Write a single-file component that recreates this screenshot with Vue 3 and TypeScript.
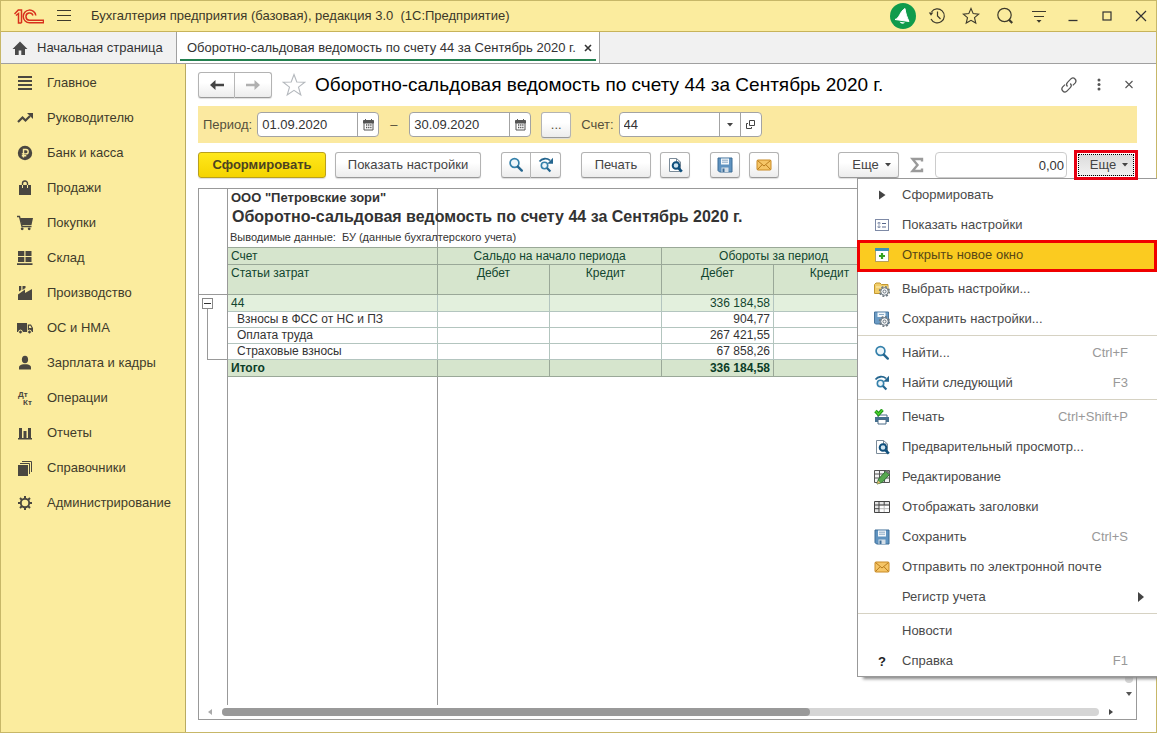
<script setup lang="ts">
import { ref } from 'vue'

interface NavItem { icon: string; label: string }
interface MenuItem { icon?: string; label: string; keys?: string; active?: boolean; sub?: boolean }
interface ReportRow { name: string; turnover: string; kind: 'group' | 'leaf' | 'total' }

const magnifier =
  '<circle cx="6.5" cy="6" r="4.4" fill="#eef6fa" stroke="#3581ab" stroke-width="1.7"/><path d="M9.8 9.6l4 4" stroke="#25668f" stroke-width="2.4" stroke-linecap="round"/>'
const nextFind =
  '<path d="M1.5 4.500C4 1 9 1 12 3.400" fill="none" stroke="#25668f" stroke-width="1.8"/><path d="M15 .8v6H9.200z" fill="#25668f"/><circle cx="6.500" cy="8.500" r="3.200" fill="#eef6fa" stroke="#3581ab" stroke-width="1.6"/><path d="M9 11l3.400 3.500" stroke="#25668f" stroke-width="2.2"/>'
const floppy =
  '<path d="M1 1h14v14H2.5L1 13.5z" fill="#5f93c0" stroke="#3d6c96"/><path d="M4 1.5h8v6H4z" fill="#f4f8fb"/><path d="M5 3.2h6M5 5.2h6" stroke="#89a9c4"/><path d="M4.5 10.5h7V15h-7z" fill="#d5dfe8"/><path d="M5.5 11.5h2V15h-2z" fill="#3d6c96"/>'
const envelope =
  '<rect x="1" y="3" width="14" height="10" rx="1" fill="#f5c566" stroke="#c98a25"/><path d="M1.5 3.5L8 9l6.5-5.5M1.5 12.5L6 7.800M14.5 12.5L10 7.800" fill="none" stroke="#b87b1c"/>'
const gear =
  '<circle cx="10.5" cy="10.5" r="4.800" fill="none" stroke="#6c7780" stroke-width="1.600" stroke-dasharray="2 1.770"/><circle cx="10.5" cy="10.5" r="3.800" fill="#f2f4f6" stroke="#6c7780"/><circle cx="10.5" cy="10.5" r="1.5" fill="#fff" stroke="#6c7780"/>'

const icons: Record<string, string> = {
  list: '<path d="M1 2h14M1 6h14M1 10h14M1 14h14" stroke="#4a4740" stroke-width="2"/>',
  trend: '<path d="M1 12l4.5-4.5 3 3L13 6" fill="none" stroke="#4a4740" stroke-width="2.2"/><path d="M10 3h6v6z" fill="#4a4740"/>',
  ruble: '<circle cx="8" cy="8" r="7.2" fill="#4a4740"/><path d="M6.5 12.5V4.5H9a2.2 2.2 0 0 1 0 4.4H4.8M4.8 10.8h4.5" fill="none" stroke="#fbec9e" stroke-width="1.4"/>',
  bag: '<path d="M2 5h12v10H2z" fill="#4a4740"/><path d="M5.5 7.5V3.5a2.5 2.5 0 0 1 5 0v4" fill="none" stroke="#4a4740" stroke-width="1.4"/><path d="M5.5 5v3M10.5 5v3" stroke="#fbec9e"/>',
  cart: '<path d="M3 3h13l-1.5 7H5z" fill="#4a4740"/><path d="M0 1.5h2.5l2.5 10h9.5" fill="none" stroke="#4a4740" stroke-width="1.3"/><circle cx="5.2" cy="13.8" r="1.4" fill="#4a4740"/><circle cx="12.2" cy="13.8" r="1.4" fill="#4a4740"/>',
  stock: '<path d="M1 1h6.3v5H1zM8.5 1h6v5h-6zM1 7h6.3v5H1zM8.5 7h6v5h-6zM0 13.2h15.5V15H0z" fill="#4a4740"/>',
  factory: '<path d="M1 15V9.5l7-5v3.5L15 4v11zM2 1h2.3v4L2 6.5zM5.5 1h3v2l-3 2z" fill="#4a4740"/>',
  truck: '<path d="M0 3h10v9H0zM10.8 4.5H14L16 8v4h-5.2z" fill="#4a4740"/><path d="M12 5.8h1.5L14.6 8H12z" fill="#fbec9e"/><circle cx="3.5" cy="12" r="1.9" fill="#4a4740" stroke="#fbec9e"/><circle cx="12.5" cy="12" r="1.9" fill="#4a4740" stroke="#fbec9e"/>',
  person: '<ellipse cx="8" cy="4.5" rx="3.1" ry="3.8" fill="#4a4740"/><path d="M2 14.5v-2.3Q2 10 6 9.2h4q4 .8 4 3v2.3z" fill="#4a4740"/>',
  dtkt: '<text x="1" y="7" font-family="Liberation Sans, sans-serif" font-weight="bold" font-size="8" fill="#4a4740">Дт</text><text x="6" y="15" font-family="Liberation Sans, sans-serif" font-weight="bold" font-size="8" fill="#4a4740">Кт</text>',
  chart: '<path d="M2 3h3v10H2zM6.5 6h3v7h-3zM11 3h3v10h-3zM1 13h14v1.5H1z" fill="#4a4740"/>',
  books: '<path d="M1 5h10v11H1z" fill="#4a4740"/><path d="M3 3.5h9.5V14M5 1.5h9.5V12" fill="none" stroke="#4a4740"/>',
  cog: '<circle cx="8" cy="8" r="4.2" fill="none" stroke="#4a4740" stroke-width="1.9"/><path d="M8 1v3M8 12v3M1 8h3M12 8h3M3 3l2.2 2.2M10.8 10.8L13 13M13 3l-2.2 2.2M5.2 10.8L3 13" stroke="#4a4740" stroke-width="2"/>',
  home: '<path d="M8 1.5L.5 9H3v6h3.7v-4.5h2.6V15H13V9h2.5z" fill="#4a4a4a"/>',
  play: '<path d="M5 3.500L11.500 8 5 12.500z" fill="#444"/>',
  settings: '<rect x="1.5" y="2.5" width="13" height="11" fill="#fff" stroke="#7e8aa6"/><path d="M4 5.5h2v1.5H4zM4 9h2v1.5H4z" fill="none" stroke="#7e8aa6" stroke-width=".8"/><path d="M8 6.5h4M8 10h4" stroke="#59688c"/>',
  window: '<rect x="1.5" y="1.5" width="13" height="13" fill="#fff" stroke="#b7a05c"/><path d="M1 1h14v3H1z" fill="#3e8fb4"/><path d="M8 6v6M5 9h6" stroke="#35a320" stroke-width="2.2"/>',
  folder: '<path d="M.5 12.5V3.5L2 2h4l1.5 1.5H14v9z" fill="#f1cd68" stroke="#c39830"/><path d="M2 6h12" stroke="#fff0b8"/>' + gear,
  saveset: '<path d="M.5 1h14v12H1.5L.5 12z" fill="#6b9bc4" stroke="#47749d"/><path d="M3.5 1.5h8V6h-8z" fill="#f4f8fb"/><path d="M5 3.5h5" stroke="#89a9c4"/>' + gear,
  find: magnifier,
  next: nextFind,
  print: '<path d="M4 6h9v3H4z" fill="#fff" stroke="#4a6b86"/><path d="M1 8h14v5H1z" fill="#45708f"/><path d="M4 10.5h8V15H4z" fill="#fff" stroke="#4a6b86"/><path d="M1.5 2l3 3.2L8.5.8" fill="none" stroke="#168b16" stroke-width="3.4"/><path d="M1.5 2l3 3.2L8.5.8" fill="none" stroke="#4cd02c" stroke-width="1.6"/>',
  preview: '<path d="M2.5 1.5h7l4 3.5v9.5h-11z" fill="#fff" stroke="#7b8b99"/><path d="M9.5 1.5v3.5h4" fill="none" stroke="#7b8b99"/><circle cx="9" cy="8.5" r="3.3" fill="#cfe4f0" stroke="#0f4f7c" stroke-width="2"/><path d="M11.4 11l3.4 3.6" stroke="#0f4f7c" stroke-width="2.6"/>',
  edit: '<path d="M.5 1.5h15v12H.5zM.5 5h15M.5 9h15M5.5 1.5v12M10.5 1.5v12" fill="#f3f3f3" stroke="#555"/><path d="M3 15l1.500-5 7-7.500 4 3-7.500 8z" fill="#57a84f" stroke="#2e6f34"/><path d="M3 15l1-3.500 2.500 2.500z" fill="#e8b878"/><path d="M11.500 2.500l1.500-1.500 3 2.500-1 1.800z" fill="#777"/>',
  table: '<path d="M.5 2.5h15v11H.5z" fill="#fff"/><path d="M.5 2.5h15v3.5H.5zM.5 6h4.5v7.5H.5z" fill="#e4e4e4"/><path d="M5 6h10.5M5 9.7h10.5M10.2 6v7.5" stroke="#bbb"/><path d="M.5 2.5h15v11H.5zM.5 6h15M5 2.5v11M.5 9.7H5M10.2 2.5V6" fill="none" stroke="#444"/>',
  save: floppy,
  mail: envelope,
  help: '<text x="8" y="13" text-anchor="middle" font-family="Liberation Sans, sans-serif" font-weight="bold" font-size="13" fill="#222">?</text>',
}

const nav: NavItem[] = [
  { icon: 'list', label: 'Главное' },
  { icon: 'trend', label: 'Руководителю' },
  { icon: 'ruble', label: 'Банк и касса' },
  { icon: 'bag', label: 'Продажи' },
  { icon: 'cart', label: 'Покупки' },
  { icon: 'stock', label: 'Склад' },
  { icon: 'factory', label: 'Производство' },
  { icon: 'truck', label: 'ОС и НМА' },
  { icon: 'person', label: 'Зарплата и кадры' },
  { icon: 'dtkt', label: 'Операции' },
  { icon: 'chart', label: 'Отчеты' },
  { icon: 'books', label: 'Справочники' },
  { icon: 'cog', label: 'Администрирование' },
]

const menu: MenuItem[][] = [
  [
    { icon: 'play', label: 'Сформировать' },
    { icon: 'settings', label: 'Показать настройки' },
    { icon: 'window', label: 'Открыть новое окно', active: true },
  ],
  [
    { icon: 'folder', label: 'Выбрать настройки...' },
    { icon: 'saveset', label: 'Сохранить настройки...' },
  ],
  [
    { icon: 'find', label: 'Найти...', keys: 'Ctrl+F' },
    { icon: 'next', label: 'Найти следующий', keys: 'F3' },
  ],
  [
    { icon: 'print', label: 'Печать', keys: 'Ctrl+Shift+P' },
    { icon: 'preview', label: 'Предварительный просмотр...' },
    { icon: 'edit', label: 'Редактирование' },
    { icon: 'table', label: 'Отображать заголовки' },
    { icon: 'save', label: 'Сохранить', keys: 'Ctrl+S' },
    { icon: 'mail', label: 'Отправить по электронной почте' },
    { label: 'Регистр учета', sub: true },
  ],
  [
    { label: 'Новости' },
    { icon: 'help', label: 'Справка', keys: 'F1' },
  ],
]

const rows: ReportRow[] = [
  { name: '44', turnover: '336 184,58', kind: 'group' },
  { name: 'Взносы в ФСС от НС и ПЗ', turnover: '904,77', kind: 'leaf' },
  { name: 'Оплата труда', turnover: '267 421,55', kind: 'leaf' },
  { name: 'Страховые взносы', turnover: '67 858,26', kind: 'leaf' },
  { name: 'Итого', turnover: '336 184,58', kind: 'total' },
]

const dateFrom = ref('01.09.2020')
const dateTo = ref('30.09.2020')
const account = ref('44')
const sum = ref('0,00')
const menuOpen = ref(true)
</script>

<template>
  <div class="app">
    <header class="titlebar">
      <svg class="logo" viewBox="0 0 30 15" fill="none" stroke="#d8301c" stroke-width="1.5">
        <path d="M.5 5L4.3 1H7.500V14M2 6.500L4.500 4.500V14H7.500" />
        <path d="M21.800 6.500A6.300 6.300 0 1 0 15.500 13.700H29.500V11.200H15.500A3.600 3.600 0 1 1 19 6.500" />
      </svg>
      <button class="plain burger" aria-label="Меню">
        <svg width="16" height="14" viewBox="0 0 16 14" stroke="#3d3a2c" stroke-width="1.2"><path d="M1 1.500h14M1 6.500h14M1 11.500h14" /></svg>
      </button>
      <span class="app-title">Бухгалтерия предприятия (базовая), редакция 3.0&nbsp; (1С:Предприятие)</span>
      <div class="title-tools">
        <button class="plain bell" aria-label="Уведомления">
          <svg width="26" height="26" viewBox="0 0 26 26">
            <circle cx="13" cy="13" r="13" fill="#109b4c" />
            <path d="M15 5.500c.6 5 2 8.500 4 13L5 16.500c5-1.500 4.500-8 10-11z" fill="#fff" stroke="#fff" stroke-linejoin="round" />
            <path d="M9.500 18.700l5.500.8q-3 3-5.500-.8z" fill="#fff" />
          </svg>
        </button>
        <button class="plain" aria-label="История">
          <svg width="18" height="18" viewBox="0 0 18 18" fill="none" stroke="#3d3a2c" stroke-width="1.2"><path d="M3.500 5A7 7 0 1 1 3 12M9.500 4.500V9l3 3" /><path d="M.8 5.500h4.500L3 8.800z" fill="#3d3a2c" stroke="none" /></svg>
        </button>
        <button class="plain" aria-label="Избранное">
          <svg width="18" height="18" viewBox="0 0 18 18" fill="none" stroke="#3d3a2c" stroke-width="1.1"><path d="M9 1.500l2.200 5.100 5.500.5-4.200 3.600 1.300 5.400L9 13.300l-4.800 2.800 1.300-5.400L1.300 7.100l5.500-.5z" /></svg>
        </button>
        <button class="plain" aria-label="Поиск">
          <svg width="18" height="18" viewBox="0 0 18 18" fill="none" stroke="#3d3a2c" stroke-width="1.2"><circle cx="8.500" cy="8" r="6.700" /><path d="M12.800 12.500l3.400 3.500" stroke-width="2.200" /></svg>
        </button>
        <button class="plain" aria-label="Настройка">
          <svg width="18" height="18" viewBox="0 0 18 18" stroke="#3d3a2c" stroke-width="1.2"><path d="M2 4.500h14M4 9.500h10" /><path d="M6.500 13h5L9 15.800z" fill="#3d3a2c" stroke="none" /></svg>
        </button>
        <button class="plain" aria-label="Свернуть">
          <svg width="18" height="18" viewBox="0 0 18 18"><path d="M4.500 13.500h9" stroke="#333" stroke-width="1.3" /></svg>
        </button>
        <button class="plain" aria-label="Развернуть">
          <svg width="18" height="18" viewBox="0 0 18 18"><rect x="5" y="5" width="8" height="8" fill="none" stroke="#333" stroke-width="1.2" /></svg>
        </button>
        <button class="plain" aria-label="Закрыть">
          <svg width="18" height="18" viewBox="0 0 18 18"><path d="M4 4l10 10M14 4L4 14" stroke="#333" stroke-width="1.2" /></svg>
        </button>
      </div>
    </header>

    <div class="tabs">
      <button class="tab home"><svg class="ico" viewBox="0 0 16 16" v-html="icons.home" />Начальная страница</button>
      <button class="tab current">
        <span>Оборотно-сальдовая ведомость по счету 44 за Сентябрь 2020 г.</span>
        <svg width="8" height="8" viewBox="0 0 8 8"><path d="M1 1l6 6M7 1L1 7" stroke="#333" stroke-width="1.6" /></svg>
      </button>
    </div>

    <div class="body">
      <nav class="sidebar">
        <a v-for="n in nav" :key="n.label" href="#" class="nav-item">
          <svg class="ico" viewBox="0 0 16 16" v-html="icons[n.icon]" />{{ n.label }}
        </a>
      </nav>

      <main class="main">
        <div class="heading">
          <div class="group">
            <button class="btn arrow" aria-label="Назад"><svg width="16" height="12" viewBox="0 0 16 12"><path d="M6.500 1v3.800H15v2.400H6.500V11L1 6z" fill="#444" /></svg></button>
            <button class="btn arrow" aria-label="Вперед"><svg width="16" height="12" viewBox="0 0 16 12"><path d="M9.500 1v3.800H1v2.400h8.500V11L15 6z" fill="#b0b0b0" /></svg></button>
          </div>
          <button class="plain star" aria-label="В избранное">
            <svg width="24" height="24" viewBox="0 0 24 24" fill="none" stroke="#b4b8bd" stroke-width="1.1"><path d="M12 1.500l2.800 7.500 8 .2-6.300 4.900 2.300 7.900L12 17.300 5.200 22l2.300-7.900L1.200 9.200l8-.2z" /></svg>
          </button>
          <h1>Оборотно-сальдовая ведомость по счету 44 за Сентябрь 2020 г.</h1>
          <div class="head-tools">
            <button class="plain" aria-label="Ссылка">
              <svg width="18" height="18" viewBox="0 0 18 18" fill="none" stroke="#555" stroke-width="1.2"><path d="M7.500 10.500a3 3 0 0 1 0-4.200l3.600-3.600a3 3 0 0 1 4.200 4.200l-2.500 2.500M10.300 7.500a3 3 0 0 1 0 4.200l-3.600 3.600a3 3 0 0 1-4.200-4.200L5 8.600" /></svg>
            </button>
            <button class="plain" aria-label="Действия">
              <svg width="18" height="18" viewBox="0 0 18 18" fill="#555"><circle cx="9" cy="4" r="1.500" /><circle cx="9" cy="8.500" r="1.500" /><circle cx="9" cy="13" r="1.500" /></svg>
            </button>
            <button class="plain" aria-label="Закрыть вкладку">
              <svg width="18" height="18" viewBox="0 0 18 18"><path d="M5.500 5l7 7M12.500 5l-7 7" stroke="#555" stroke-width="1.1" /></svg>
            </button>
          </div>
        </div>

        <div class="filters">
          <label for="from">Период:</label>
          <div class="field">
            <input id="from" v-model="dateFrom">
            <button aria-label="Календарь"><svg width="11" height="12" viewBox="0 0 11 12"><path d="M1 2h9v9H1z" fill="#fff" stroke="#555" /><path d="M.5 1.500h10V4H.5zM2.500 0v2M8.500 0v2" fill="#555" stroke="#555" /><path d="M3 6h5.500M3 8.500h5.500" stroke="#555" stroke-width="1.4" stroke-dasharray="1.300 .8" /></svg></button>
          </div>
          <label class="dash" for="to">–</label>
          <div class="field">
            <input id="to" v-model="dateTo">
            <button aria-label="Календарь"><svg width="11" height="12" viewBox="0 0 11 12"><path d="M1 2h9v9H1z" fill="#fff" stroke="#555" /><path d="M.5 1.500h10V4H.5zM2.500 0v2M8.500 0v2" fill="#555" stroke="#555" /><path d="M3 6h5.500M3 8.500h5.500" stroke="#555" stroke-width="1.4" stroke-dasharray="1.300 .8" /></svg></button>
          </div>
          <button class="btn dots">...</button>
          <label for="acc">Счет:</label>
          <div class="field">
            <input id="acc" v-model="account">
            <button aria-label="Выбрать"><svg width="6" height="4" viewBox="0 0 6 4"><path d="M0 0h6L3 3.500z" fill="#444" /></svg></button>
            <button aria-label="Открыть"><svg width="11" height="11" viewBox="0 0 11 11" fill="none" stroke="#444"><path d="M4.500 1.500h5v5h-5zM3 4.500H1.500v5h5V8" /></svg></button>
          </div>
        </div>

        <div class="toolbar">
          <button class="btn primary">Сформировать</button>
          <button class="btn wide">Показать настройки</button>
          <div class="group find">
            <button class="btn icon" aria-label="Найти"><svg class="ico" viewBox="0 0 16 16" v-html="icons.find" /></button>
            <button class="btn icon" aria-label="Найти следующий"><svg class="ico" viewBox="0 0 16 16" v-html="icons.next" /></button>
          </div>
          <button class="btn print">Печать</button>
          <button class="btn icon" aria-label="Предварительный просмотр"><svg class="ico" viewBox="0 0 16 16" v-html="icons.preview" /></button>
          <button class="btn icon save" aria-label="Сохранить"><svg class="ico" viewBox="0 0 16 16" v-html="icons.save" /></button>
          <button class="btn icon" aria-label="Отправить по почте"><svg class="ico" viewBox="0 0 16 16" v-html="icons.mail" /></button>
          <div class="right-tools">
            <button class="btn more">Еще<svg width="6" height="4" viewBox="0 0 6 4"><path d="M0 0h6L3 3.500z" fill="#444" /></svg></button>
            <label class="sigma" for="sum" aria-label="Сумма">
              <svg width="14" height="16" viewBox="0 0 14 16"><path d="M12 4.500V2H2.500l5 6-5 6H12v-2.500" fill="none" stroke="#9a9a9a" stroke-width="2.400" /></svg>
            </label>
            <input id="sum" v-model="sum" class="sum">
            <div class="anchor">
              <div class="frame">
                <button class="more focus" @click="menuOpen = !menuOpen">Еще<svg width="6" height="4" viewBox="0 0 6 4"><path d="M0 0h6L3 3.500z" fill="#444" /></svg></button>
              </div>
              <div v-if="menuOpen" class="menu" role="menu">
                <div v-for="(section, i) in menu" :key="i" class="section">
                  <button v-for="m in section" :key="m.label" role="menuitem" class="item" :class="{ active: m.active }">
                    <svg class="ico" viewBox="0 0 16 16" v-html="m.icon ? icons[m.icon] : ''" />
                    <span>{{ m.label }}</span>
                    <kbd v-if="m.keys">{{ m.keys }}</kbd>
                    <svg v-if="m.sub" class="sub" width="6" height="10" viewBox="0 0 6 10"><path d="M0 0l6 5-6 5z" fill="#444" /></svg>
                  </button>
                </div>
              </div>
            </div>
          </div>
        </div>

        <section class="report">
          <div class="sheet">
            <div class="gutter">
              <div class="gutter-head"></div>
              <div class="tree"><button aria-label="Свернуть группу"></button><i></i></div>
            </div>
            <div class="page">
              <p class="org">ООО "Петровские зори"</p>
              <h2>Оборотно-сальдовая ведомость по счету 44 за Сентябрь 2020 г.</h2>
              <p class="note">Выводимые данные:&nbsp; БУ (данные бухгалтерского учета)</p>
              <table>
                <colgroup><col class="c-name"><col v-for="c in 6" :key="c" class="c-num"></colgroup>
                <thead>
                  <tr class="h1">
                    <th class="l">Счет</th>
                    <th colspan="2">Сальдо на начало периода</th>
                    <th colspan="2">Обороты за период</th>
                    <th colspan="2"></th>
                  </tr>
                  <tr class="h2">
                    <th class="l">Статьи затрат</th>
                    <th>Дебет</th><th>Кредит</th><th>Дебет</th><th>Кредит</th><th></th><th></th>
                  </tr>
                </thead>
                <tbody>
                  <tr v-for="r in rows" :key="r.name" :class="r.kind">
                    <td class="l">{{ r.name }}</td><td></td><td></td><td>{{ r.turnover }}</td><td></td><td></td><td></td>
                  </tr>
                </tbody>
              </table>
            </div>
            <div class="vscroll"><i></i><svg width="6" height="4" viewBox="0 0 6 4"><path d="M0 0h6L3 4z" fill="#555" /></svg></div>
          </div>
          <div class="hscroll">
            <svg width="4" height="6" viewBox="0 0 4 6"><path d="M4 0v6L0 3z" fill="#aaa" /></svg>
            <div class="track"><i></i></div>
            <svg width="4" height="6" viewBox="0 0 4 6"><path d="M0 0v6l4-3z" fill="#444" /></svg>
          </div>
        </section>
      </main>
    </div>
  </div>
</template>

<style>
body { margin: 0; }
</style>

<style scoped>
* { box-sizing: border-box; }
.app {
  min-height: 100vh;
  display: flex;
  flex-direction: column;
  border: 1px solid #c7b768;
  background: #fff;
  color: #444;
  font: 13px/16px "Liberation Sans", Arial, sans-serif;
}
button, input { font: inherit; color: inherit; }
button { cursor: pointer; }
.plain { border: 0; background: none; padding: 0; display: flex; align-items: center; justify-content: center; }
.ico { width: 16px; height: 16px; flex: none; }

.titlebar { height: 31px; display: flex; align-items: center; background: #fbec9e; border-bottom: 1px solid #c7b35a; padding: 0 6px 0 13px; color: #3b3829; }
.logo { width: 30px; height: 15px; }
.burger { margin-left: 12px; }
.app-title { margin-left: 19px; }
.title-tools { margin-left: auto; display: flex; align-items: center; gap: 16px; }
.bell { margin-right: -4px; }

.tabs { height: 32px; display: flex; background: #f1f1f1; border-bottom: 1px solid #a0a0a0; }
.tab { border: 0; background: none; border-right: 1px solid #a0a0a0; display: flex; align-items: center; color: #333; }
.home { width: 176px; padding: 0 0 0 11px; gap: 9px; }
.current { background: linear-gradient(#23804f, #23804f) 3px 27px / calc(100% - 6px) 2px no-repeat #fff; padding: 0 7px 0 10px; gap: 8px; }

.body { flex: 1; display: flex; }
.sidebar { width: 185px; flex: none; background: #fbec9e; border-right: 1px solid #b9ab62; padding-top: 1px; }
.nav-item { height: 35px; display: flex; align-items: center; gap: 14px; padding-left: 16px; color: #3f3b2b; text-decoration: none; white-space: nowrap; }

.main { flex: 1; min-width: 0; display: flex; flex-direction: column; padding: 8px 19px 12px 12px; }
.heading { height: 26px; display: flex; align-items: center; }
.btn {
  height: 26px; padding: 0 12px; display: flex; align-items: center; justify-content: center;
  border: 1px solid #b3b3b3; border-bottom-color: #999; border-radius: 3px;
  background: linear-gradient(#fff 40%, #ececec); box-shadow: 0 1px 1px #ddd; white-space: nowrap;
}
.group { display: flex; }
.group .btn:first-child { border-radius: 3px 0 0 3px; }
.group .btn:last-child { border-radius: 0 3px 3px 0; border-left: 0; }
.arrow { width: 37px; padding: 0; }
.star { margin-left: 10px; }
h1 { margin: 0 0 0 9px; font-size: 19px; line-height: 22px; font-weight: 400; color: #000; white-space: nowrap; }
.head-tools { margin: 0 -1px 0 auto; display: flex; gap: 12px; }

.filters { margin-top: 8px; height: 37px; display: flex; align-items: center; background: #fbe9a0; padding-left: 5px; color: #55503c; }
.field { display: flex; height: 25px; border: 1px solid #a3a3a3; border-radius: 4px; background: #fff; overflow: hidden; margin-left: 5px; }
.field input { width: 99px; border: 0; padding: 0 0 0 4px; outline: 0; color: #333; background: none; }
.field button { width: 21px; padding: 0; border: 0; border-left: 1px solid #a3a3a3; background: none; display: flex; align-items: center; justify-content: center; }
.dash { width: 14px; margin-left: 11px; }
.dots { width: 30px; padding: 0; margin: 0 10px; }

.toolbar { margin-top: 9px; display: flex; align-items: center; gap: 9px; }
.primary { width: 128px; padding: 0; font-weight: 700; color: #4c4320; background: linear-gradient(#ffe81c, #f5d400); border-color: #b9a01c; }
.wide { width: 146px; padding: 0; }
.icon { width: 30px; padding: 0; }
.find, .print, .save { margin-left: 11px; }
.print { width: 70px; }
.right-tools { margin-left: auto; display: flex; align-items: center; }
.more { width: 61px; gap: 6px; }
.btn.more { padding: 0 0 0 6px; }
.sigma { margin: 0 11px; display: flex; }
.sum { width: 132px; height: 26px; border: 1px solid #ccc; border-radius: 4px; text-align: right; padding: 0 2px; color: #333; }
.anchor { position: relative; margin: -2px -1px -2px 7px; }
.frame { position: relative; z-index: 2; border: 3px solid #e60012; padding: 1px; background: #fff; }
.focus { width: 56px; height: 22px; padding: 0 0 0 6px; display: flex; align-items: center; justify-content: center; border: 1px dotted #000; background: linear-gradient(#dcdcdc, #f0f0f0); }

.menu { position: absolute; z-index: 1; right: -19px; top: 28px; width: 300px; background: #fff; border: 1px solid #999; border-right: 0; padding: 1px 0 0; box-shadow: 5px 3px 3px -1px #888; }
.section + .section { border-top: 1px solid #d6d2c3; margin-top: 1px; padding-top: 2px; }
.item { width: 100%; height: 30px; display: flex; align-items: center; border: 0; background: none; padding: 0 29px 0 16px; text-align: left; white-space: nowrap; color: #4a4a4a; }
.item span { margin-left: 12px; }
.item kbd { margin-left: auto; font: inherit; color: #999; }
.item .sub { margin: 0 -16px 0 auto; }
.item.active { background: #fbcb20; outline: 3px solid #f00000; outline-offset: -3px; color: #584716; margin: 0 0 -2px -1px; padding: 0 29px 2px 17px; width: calc(100% + 1px); height: 32px; position: relative; }

.report { flex: 1; margin-top: 10px; border: 1px solid #999; display: flex; flex-direction: column; min-width: 0; }
.sheet { flex: 1; display: flex; min-width: 0; overflow: hidden; background: linear-gradient(#999, #999) 238px 0 / 1px 100% no-repeat; }
.gutter { width: 29px; flex: none; border-right: 1px solid #999; }
.gutter-head { height: 106px; border-bottom: 1px solid #999; }
.tree { height: 65px; padding: 3px 0 0 3px; display: flex; flex-direction: column; }
.tree button { flex: none; width: 11px; height: 11px; padding: 0; border: 1px solid #888; background: linear-gradient(#333, #333) center / 7px 1px no-repeat #fff; }
.tree i { flex: 1; margin-left: 5px; border: solid #999; border-width: 0 0 1px 1px; }
.page { flex: 1; min-width: 0; overflow: hidden; color: #333; white-space: nowrap; font-size: 12px; }
.page p, .page h2 { margin: 0; }
.page .org { padding-left: 3px; font-size: 13px; font-weight: 700; line-height: 18px; }
.page h2 { padding-left: 4px; font-size: 16px; line-height: 20px; }
.page .note { padding-left: 2px; font-size: 11px; line-height: 20px; }
table { border-collapse: collapse; table-layout: fixed; width: 882px; margin-left: -1px; }
.c-name { width: 210px; }
.c-num { width: 112px; }
th, td { padding: 0 3px; border: 1px solid #9aa898; line-height: 15px; height: 16px; }
th { font-weight: 400; color: #12452f; background: #d6e5cd; vertical-align: top; line-height: 16px; }
td { text-align: right; border-color: #b3c5bf; }
.l { text-align: left; }
.h1 th { height: 17px; }
.h2 th { height: 30px; }
.group td { height: 17px; background: #e3f0dd; color: #12452f; }
tr.group { display: table-row; }
.leaf .l { padding-left: 9px; }
td:nth-child(1), td:nth-child(2) { border-left-color: #999; }
.total td { height: 17px; background: #d6e5cd; color: #0b3d28; font-weight: 700; border-color: #9aa898; }
.vscroll { width: 14px; flex: none; display: flex; flex-direction: column; align-items: center; padding-bottom: 9px; }
.vscroll i { flex: 1; width: 8px; border-radius: 4px; background: #d5d5d5; margin: 20px 0 9px; }
.hscroll { height: 14px; display: flex; align-items: center; padding: 0 23px 0 9px; }
.track { flex: 1; height: 8px; margin: 0 10px; border-radius: 4px; background: #d5d5d5; display: flex; }
.track i { width: 67%; border-radius: 4px; background: #999; }
</style>
